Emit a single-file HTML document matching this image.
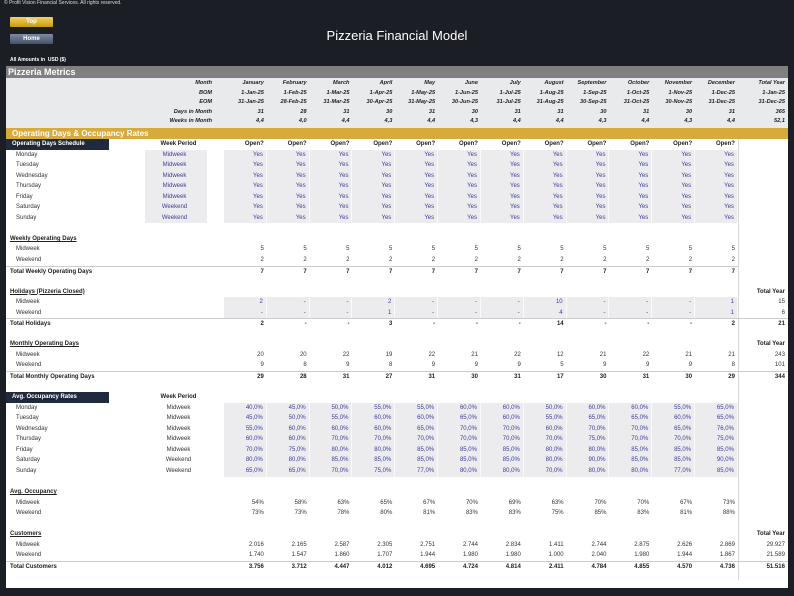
<!DOCTYPE html>
<html><head><meta charset="utf-8">
<style>
*{margin:0;padding:0;box-sizing:border-box}
body{width:794px;height:596px;background:#1b1e25;font-family:"Liberation Sans",sans-serif;position:relative;overflow:hidden}
.copy{position:absolute;left:4px;top:0px;font-size:5px;color:#ddd}
.btn{position:absolute;left:10px;width:43px;height:10px;font-size:6px;font-weight:bold;color:#fff;text-align:center;line-height:10px;border-radius:1px}
.top{top:17px;background:linear-gradient(#f3d25a,#c99a12)}
.home{top:34px;background:linear-gradient(#7d8aa3,#46526a)}
.title{position:absolute;left:0;width:794px;top:28px;text-align:center;color:#fff;font-size:13px}
.amt{position:absolute;left:10px;top:57px;font-size:5px;color:#fff;font-weight:bold}
.sheet{position:absolute;left:6px;top:66px;width:782px;height:522px;background:#fff}
.pm{position:absolute;left:6px;top:66px;width:782px;height:12px;background:#808080;color:#fff;font-weight:bold;font-size:9px;line-height:12px;padding-left:2px}
.mh{position:absolute;left:6px;top:78px;width:782px;height:50px;background:#e9eaec}
.gold{position:absolute;left:6px;top:128px;width:782px;height:11px;background:#d7aa3c;color:#fff;font-weight:bold;font-size:8px;line-height:11px;padding-left:6px}
.g{display:grid;grid-template-columns:139px 70px 9px repeat(12,42.83px) 50px;position:absolute;left:6px}
.g>div{white-space:nowrap;overflow:visible;padding-right:3px;text-align:right}
.mhr{height:9.6px;font-size:5.6px;font-weight:bold;font-style:italic;line-height:9.6px;color:#222}
.r{height:10.55px;font-size:6px;line-height:10.55px;color:#333}
.g>div.l{text-align:left;padding-left:10px}
.g>div.h{padding-left:4px;font-weight:bold;text-decoration:underline;color:#222;text-align:left}
.r.t{border-top:1px solid #ccc;font-weight:bold;color:#222}
.g>div.t.l{padding-left:4px}
.nav{display:block;background:#1f2a3f;color:#fff;font-weight:bold;padding-left:6px;margin-right:33px;margin-left:-4px}
.b{font-weight:bold;color:#222}
.g>div.c{text-align:center}
.i{background:#ececee;color:#3b3b9c;border-right:1px solid #fafafa}
.g>div.wp{background:#ececee;color:#3b3b9c;text-align:center;margin-right:8px}
.vl{position:absolute;left:738px;top:139px;width:1px;height:441px;background:#d8d8d8}
</style></head><body>
<div class="copy">© Profit Vision Financial Services. All rights reserved.</div>
<div class="btn top">Top</div>
<div class="btn home">Home</div>
<div class="title">Pizzeria Financial Model</div>
<div class="amt">All Amounts in &nbsp;USD ($)</div>
<div class="sheet"></div>
<div class="pm">Pizzeria Metrics</div>
<div class="mh"></div>
<div class="g" style="top:79px">
<div class="mhr" style="grid-column:1/3">Month</div><div class="mhr"></div><div class="mhr">January</div><div class="mhr">February</div><div class="mhr">March</div><div class="mhr">April</div><div class="mhr">May</div><div class="mhr">June</div><div class="mhr">July</div><div class="mhr">August</div><div class="mhr">September</div><div class="mhr">October</div><div class="mhr">November</div><div class="mhr">December</div><div class="mhr">Total Year</div>
<div class="mhr" style="grid-column:1/3">BOM</div><div class="mhr"></div><div class="mhr">1-Jan-25</div><div class="mhr">1-Feb-25</div><div class="mhr">1-Mar-25</div><div class="mhr">1-Apr-25</div><div class="mhr">1-May-25</div><div class="mhr">1-Jun-25</div><div class="mhr">1-Jul-25</div><div class="mhr">1-Aug-25</div><div class="mhr">1-Sep-25</div><div class="mhr">1-Oct-25</div><div class="mhr">1-Nov-25</div><div class="mhr">1-Dec-25</div><div class="mhr">1-Jan-25</div>
<div class="mhr" style="grid-column:1/3">EOM</div><div class="mhr"></div><div class="mhr">31-Jan-25</div><div class="mhr">28-Feb-25</div><div class="mhr">31-Mar-25</div><div class="mhr">30-Apr-25</div><div class="mhr">31-May-25</div><div class="mhr">30-Jun-25</div><div class="mhr">31-Jul-25</div><div class="mhr">31-Aug-25</div><div class="mhr">30-Sep-25</div><div class="mhr">31-Oct-25</div><div class="mhr">30-Nov-25</div><div class="mhr">31-Dec-25</div><div class="mhr">31-Dec-25</div>
<div class="mhr" style="grid-column:1/3">Days in Month</div><div class="mhr"></div><div class="mhr">31</div><div class="mhr">28</div><div class="mhr">31</div><div class="mhr">30</div><div class="mhr">31</div><div class="mhr">30</div><div class="mhr">31</div><div class="mhr">31</div><div class="mhr">30</div><div class="mhr">31</div><div class="mhr">30</div><div class="mhr">31</div><div class="mhr">365</div>
<div class="mhr" style="grid-column:1/3">Weeks in Month</div><div class="mhr"></div><div class="mhr">4,4</div><div class="mhr">4,0</div><div class="mhr">4,4</div><div class="mhr">4,3</div><div class="mhr">4,4</div><div class="mhr">4,3</div><div class="mhr">4,4</div><div class="mhr">4,4</div><div class="mhr">4,3</div><div class="mhr">4,4</div><div class="mhr">4,3</div><div class="mhr">4,4</div><div class="mhr">52,1</div>
</div>
<div class="gold">Operating Days &amp; Occupancy Rates</div>
<div class="vl"></div>
<div class="g" style="top:139px">
<div class="r h"><span class="nav">Operating Days Schedule</span></div><div class="r b c">Week Period</div><div class="r"></div><div class="r b">Open?</div><div class="r b">Open?</div><div class="r b">Open?</div><div class="r b">Open?</div><div class="r b">Open?</div><div class="r b">Open?</div><div class="r b">Open?</div><div class="r b">Open?</div><div class="r b">Open?</div><div class="r b">Open?</div><div class="r b">Open?</div><div class="r b">Open?</div><div class="r"></div>
<div class="r l">Monday</div><div class="r wp">Midweek</div><div class="r"></div><div class="r i">Yes</div><div class="r i">Yes</div><div class="r i">Yes</div><div class="r i">Yes</div><div class="r i">Yes</div><div class="r i">Yes</div><div class="r i">Yes</div><div class="r i">Yes</div><div class="r i">Yes</div><div class="r i">Yes</div><div class="r i">Yes</div><div class="r i">Yes</div><div class="r"></div>
<div class="r l">Tuesday</div><div class="r wp">Midweek</div><div class="r"></div><div class="r i">Yes</div><div class="r i">Yes</div><div class="r i">Yes</div><div class="r i">Yes</div><div class="r i">Yes</div><div class="r i">Yes</div><div class="r i">Yes</div><div class="r i">Yes</div><div class="r i">Yes</div><div class="r i">Yes</div><div class="r i">Yes</div><div class="r i">Yes</div><div class="r"></div>
<div class="r l">Wednesday</div><div class="r wp">Midweek</div><div class="r"></div><div class="r i">Yes</div><div class="r i">Yes</div><div class="r i">Yes</div><div class="r i">Yes</div><div class="r i">Yes</div><div class="r i">Yes</div><div class="r i">Yes</div><div class="r i">Yes</div><div class="r i">Yes</div><div class="r i">Yes</div><div class="r i">Yes</div><div class="r i">Yes</div><div class="r"></div>
<div class="r l">Thursday</div><div class="r wp">Midweek</div><div class="r"></div><div class="r i">Yes</div><div class="r i">Yes</div><div class="r i">Yes</div><div class="r i">Yes</div><div class="r i">Yes</div><div class="r i">Yes</div><div class="r i">Yes</div><div class="r i">Yes</div><div class="r i">Yes</div><div class="r i">Yes</div><div class="r i">Yes</div><div class="r i">Yes</div><div class="r"></div>
<div class="r l">Friday</div><div class="r wp">Midweek</div><div class="r"></div><div class="r i">Yes</div><div class="r i">Yes</div><div class="r i">Yes</div><div class="r i">Yes</div><div class="r i">Yes</div><div class="r i">Yes</div><div class="r i">Yes</div><div class="r i">Yes</div><div class="r i">Yes</div><div class="r i">Yes</div><div class="r i">Yes</div><div class="r i">Yes</div><div class="r"></div>
<div class="r l">Saturday</div><div class="r wp">Weekend</div><div class="r"></div><div class="r i">Yes</div><div class="r i">Yes</div><div class="r i">Yes</div><div class="r i">Yes</div><div class="r i">Yes</div><div class="r i">Yes</div><div class="r i">Yes</div><div class="r i">Yes</div><div class="r i">Yes</div><div class="r i">Yes</div><div class="r i">Yes</div><div class="r i">Yes</div><div class="r"></div>
<div class="r l">Sunday</div><div class="r wp">Weekend</div><div class="r"></div><div class="r i">Yes</div><div class="r i">Yes</div><div class="r i">Yes</div><div class="r i">Yes</div><div class="r i">Yes</div><div class="r i">Yes</div><div class="r i">Yes</div><div class="r i">Yes</div><div class="r i">Yes</div><div class="r i">Yes</div><div class="r i">Yes</div><div class="r i">Yes</div><div class="r"></div>
<div class="r" style="grid-column:1/-1"></div>
<div class="r h" style="grid-column:1/-1">Weekly Operating Days</div>
<div class="r l">Midweek</div><div class="r"></div><div class="r"></div><div class="r">5</div><div class="r">5</div><div class="r">5</div><div class="r">5</div><div class="r">5</div><div class="r">5</div><div class="r">5</div><div class="r">5</div><div class="r">5</div><div class="r">5</div><div class="r">5</div><div class="r">5</div><div class="r"></div>
<div class="r l">Weekend</div><div class="r"></div><div class="r"></div><div class="r">2</div><div class="r">2</div><div class="r">2</div><div class="r">2</div><div class="r">2</div><div class="r">2</div><div class="r">2</div><div class="r">2</div><div class="r">2</div><div class="r">2</div><div class="r">2</div><div class="r">2</div><div class="r"></div>
<div class="r t l">Total Weekly Operating Days</div><div class="r t"></div><div class="r t"></div><div class="r t">7</div><div class="r t">7</div><div class="r t">7</div><div class="r t">7</div><div class="r t">7</div><div class="r t">7</div><div class="r t">7</div><div class="r t">7</div><div class="r t">7</div><div class="r t">7</div><div class="r t">7</div><div class="r t">7</div><div class="r"></div>
<div class="r" style="grid-column:1/-1"></div>
<div class="r h" style="grid-column:1/16">Holidays (Pizzeria Closed)</div><div class="r b">Total Year</div>
<div class="r l">Midweek</div><div class="r"></div><div class="r"></div><div class="r i">2</div><div class="r i">-</div><div class="r i">-</div><div class="r i">2</div><div class="r i">-</div><div class="r i">-</div><div class="r i">-</div><div class="r i">10</div><div class="r i">-</div><div class="r i">-</div><div class="r i">-</div><div class="r i">1</div><div class="r">15</div>
<div class="r l">Weekend</div><div class="r"></div><div class="r"></div><div class="r i">-</div><div class="r i">-</div><div class="r i">-</div><div class="r i">1</div><div class="r i">-</div><div class="r i">-</div><div class="r i">-</div><div class="r i">4</div><div class="r i">-</div><div class="r i">-</div><div class="r i">-</div><div class="r i">1</div><div class="r">6</div>
<div class="r t l">Total Holidays</div><div class="r t"></div><div class="r t"></div><div class="r t">2</div><div class="r t">-</div><div class="r t">-</div><div class="r t">3</div><div class="r t">-</div><div class="r t">-</div><div class="r t">-</div><div class="r t">14</div><div class="r t">-</div><div class="r t">-</div><div class="r t">-</div><div class="r t">2</div><div class="r t">21</div>
<div class="r" style="grid-column:1/-1"></div>
<div class="r h" style="grid-column:1/16">Monthly Operating Days</div><div class="r b">Total Year</div>
<div class="r l">Midweek</div><div class="r"></div><div class="r"></div><div class="r">20</div><div class="r">20</div><div class="r">22</div><div class="r">19</div><div class="r">22</div><div class="r">21</div><div class="r">22</div><div class="r">12</div><div class="r">21</div><div class="r">22</div><div class="r">21</div><div class="r">21</div><div class="r">243</div>
<div class="r l">Weekend</div><div class="r"></div><div class="r"></div><div class="r">9</div><div class="r">8</div><div class="r">9</div><div class="r">8</div><div class="r">9</div><div class="r">9</div><div class="r">9</div><div class="r">5</div><div class="r">9</div><div class="r">9</div><div class="r">9</div><div class="r">8</div><div class="r">101</div>
<div class="r t l">Total Monthly Operating Days</div><div class="r t"></div><div class="r t"></div><div class="r t">29</div><div class="r t">28</div><div class="r t">31</div><div class="r t">27</div><div class="r t">31</div><div class="r t">30</div><div class="r t">31</div><div class="r t">17</div><div class="r t">30</div><div class="r t">31</div><div class="r t">30</div><div class="r t">29</div><div class="r t">344</div>
<div class="r" style="grid-column:1/-1"></div>
<div class="r h"><span class="nav">Avg. Occupancy Rates</span></div><div class="r b c">Week Period</div><div class="r" style="grid-column:3/-1"></div>
<div class="r l">Monday</div><div class="r c">Midweek</div><div class="r"></div><div class="r i">40,0%</div><div class="r i">45,0%</div><div class="r i">50,0%</div><div class="r i">55,0%</div><div class="r i">55,0%</div><div class="r i">60,0%</div><div class="r i">60,0%</div><div class="r i">50,0%</div><div class="r i">60,0%</div><div class="r i">60,0%</div><div class="r i">55,0%</div><div class="r i">65,0%</div><div class="r"></div>
<div class="r l">Tuesday</div><div class="r c">Midweek</div><div class="r"></div><div class="r i">45,0%</div><div class="r i">50,0%</div><div class="r i">55,0%</div><div class="r i">60,0%</div><div class="r i">60,0%</div><div class="r i">65,0%</div><div class="r i">60,0%</div><div class="r i">55,0%</div><div class="r i">65,0%</div><div class="r i">65,0%</div><div class="r i">60,0%</div><div class="r i">65,0%</div><div class="r"></div>
<div class="r l">Wednesday</div><div class="r c">Midweek</div><div class="r"></div><div class="r i">55,0%</div><div class="r i">60,0%</div><div class="r i">60,0%</div><div class="r i">60,0%</div><div class="r i">65,0%</div><div class="r i">70,0%</div><div class="r i">70,0%</div><div class="r i">60,0%</div><div class="r i">70,0%</div><div class="r i">70,0%</div><div class="r i">65,0%</div><div class="r i">76,0%</div><div class="r"></div>
<div class="r l">Thursday</div><div class="r c">Midweek</div><div class="r"></div><div class="r i">60,0%</div><div class="r i">60,0%</div><div class="r i">70,0%</div><div class="r i">70,0%</div><div class="r i">70,0%</div><div class="r i">70,0%</div><div class="r i">70,0%</div><div class="r i">70,0%</div><div class="r i">75,0%</div><div class="r i">70,0%</div><div class="r i">70,0%</div><div class="r i">75,0%</div><div class="r"></div>
<div class="r l">Friday</div><div class="r c">Midweek</div><div class="r"></div><div class="r i">70,0%</div><div class="r i">75,0%</div><div class="r i">80,0%</div><div class="r i">80,0%</div><div class="r i">85,0%</div><div class="r i">85,0%</div><div class="r i">85,0%</div><div class="r i">80,0%</div><div class="r i">80,0%</div><div class="r i">85,0%</div><div class="r i">85,0%</div><div class="r i">85,0%</div><div class="r"></div>
<div class="r l">Saturday</div><div class="r c">Weekend</div><div class="r"></div><div class="r i">80,0%</div><div class="r i">80,0%</div><div class="r i">85,0%</div><div class="r i">85,0%</div><div class="r i">85,0%</div><div class="r i">85,0%</div><div class="r i">85,0%</div><div class="r i">80,0%</div><div class="r i">90,0%</div><div class="r i">85,0%</div><div class="r i">85,0%</div><div class="r i">90,0%</div><div class="r"></div>
<div class="r l">Sunday</div><div class="r c">Weekend</div><div class="r"></div><div class="r i">65,0%</div><div class="r i">65,0%</div><div class="r i">70,0%</div><div class="r i">75,0%</div><div class="r i">77,0%</div><div class="r i">80,0%</div><div class="r i">80,0%</div><div class="r i">70,0%</div><div class="r i">80,0%</div><div class="r i">80,0%</div><div class="r i">77,0%</div><div class="r i">85,0%</div><div class="r"></div>
<div class="r" style="grid-column:1/-1"></div>
<div class="r h" style="grid-column:1/-1">Avg. Occupancy</div>
<div class="r l">Midweek</div><div class="r"></div><div class="r"></div><div class="r">54%</div><div class="r">58%</div><div class="r">63%</div><div class="r">65%</div><div class="r">67%</div><div class="r">70%</div><div class="r">69%</div><div class="r">63%</div><div class="r">70%</div><div class="r">70%</div><div class="r">67%</div><div class="r">73%</div><div class="r"></div>
<div class="r l">Weekend</div><div class="r"></div><div class="r"></div><div class="r">73%</div><div class="r">73%</div><div class="r">78%</div><div class="r">80%</div><div class="r">81%</div><div class="r">83%</div><div class="r">83%</div><div class="r">75%</div><div class="r">85%</div><div class="r">83%</div><div class="r">81%</div><div class="r">88%</div><div class="r"></div>
<div class="r" style="grid-column:1/-1"></div>
<div class="r h" style="grid-column:1/16">Customers</div><div class="r b">Total Year</div>
<div class="r l">Midweek</div><div class="r"></div><div class="r"></div><div class="r">2.016</div><div class="r">2.165</div><div class="r">2.587</div><div class="r">2.305</div><div class="r">2.751</div><div class="r">2.744</div><div class="r">2.834</div><div class="r">1.411</div><div class="r">2.744</div><div class="r">2.875</div><div class="r">2.626</div><div class="r">2.869</div><div class="r">29.927</div>
<div class="r l">Weekend</div><div class="r"></div><div class="r"></div><div class="r">1.740</div><div class="r">1.547</div><div class="r">1.860</div><div class="r">1.707</div><div class="r">1.944</div><div class="r">1.980</div><div class="r">1.980</div><div class="r">1.000</div><div class="r">2.040</div><div class="r">1.980</div><div class="r">1.944</div><div class="r">1.867</div><div class="r">21.589</div>
<div class="r t l">Total Customers</div><div class="r t"></div><div class="r t"></div><div class="r t">3.756</div><div class="r t">3.712</div><div class="r t">4.447</div><div class="r t">4.012</div><div class="r t">4.695</div><div class="r t">4.724</div><div class="r t">4.814</div><div class="r t">2.411</div><div class="r t">4.784</div><div class="r t">4.855</div><div class="r t">4.570</div><div class="r t">4.736</div><div class="r t">51.516</div>
</div>
</body></html>
